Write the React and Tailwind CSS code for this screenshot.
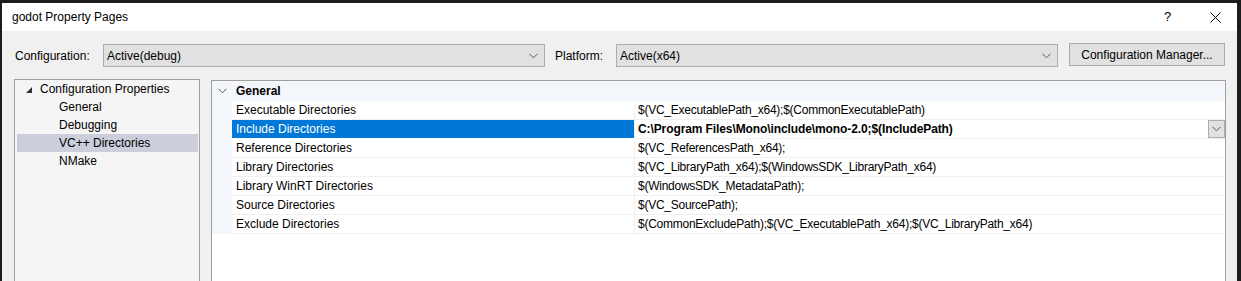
import React from "react";

const Chevron = ({ className = "" }) => (
  <svg width="9" height="6" viewBox="0 0 9 6" className={className}>
    <polyline points="0.5,0.8 4.5,4.8 8.5,0.8" fill="none" stroke="#555" strokeWidth="1" />
  </svg>
);

const rows = [
  ["Executable Directories", "$(VC_ExecutablePath_x64);$(CommonExecutablePath)"],
  ["Include Directories", "C:\\Program Files\\Mono\\include\\mono-2.0;$(IncludePath)", true],
  ["Reference Directories", "$(VC_ReferencesPath_x64);"],
  ["Library Directories", "$(VC_LibraryPath_x64);$(WindowsSDK_LibraryPath_x64)"],
  ["Library WinRT Directories", "$(WindowsSDK_MetadataPath);"],
  ["Source Directories", "$(VC_SourcePath);"],
  ["Exclude Directories", "$(CommonExcludePath);$(VC_ExecutablePath_x64);$(VC_LibraryPath_x64)"],
];

export default function App() {
  return (
    <div
      className="w-[1241px] h-[281px] overflow-hidden bg-[#1c1c1c] flex pt-[3px] pl-[2px] pr-[4px] text-[12px] text-black"
      style={{ fontFamily: '"Liberation Sans", Arial, sans-serif' }}
    >
      <div className="flex-1 flex flex-col bg-[#f0f0f0]">
        {/* Title bar */}
        <div className="h-[28px] bg-white flex items-center pl-[10px] shrink-0">
          <span className="flex-1">godot Property Pages</span>
          <span className="w-[10px] text-[13px] mr-[36px]">?</span>
          <svg width="11" height="11" viewBox="0 0 11 11" className="mr-[16px]">
            <path d="M0.5 0.5 L10.5 10.5 M10.5 0.5 L0.5 10.5" stroke="#000" strokeWidth="1" />
          </svg>
        </div>

        {/* Config row */}
        <div className="mt-[13px] h-[23px] flex items-center pl-[13px] shrink-0">
          <div className="w-[88px]">Configuration:</div>
          <div className="w-[442px] h-[23px] bg-[#e1e1e1] border border-[#adadad] flex items-center pl-[3px] pr-[6px]">
            <span className="flex-1">Active(debug)</span>
            <Chevron />
          </div>
          <div className="ml-[10px] w-[61px]">Platform:</div>
          <div className="w-[442px] h-[23px] bg-[#e1e1e1] border border-[#adadad] flex items-center pl-[3px] pr-[6px]">
            <span className="flex-1">Active(x64)</span>
            <Chevron />
          </div>
          <div className="ml-[11px] w-[156px] h-[23px] -mt-[2px] bg-[#e1e1e1] border border-[#adadad] flex items-center justify-center">
            Configuration Manager...
          </div>
        </div>

        {/* Panels */}
        <div className="mt-[12px] flex-1 flex pl-[12px] pr-[11px] gap-[11px] min-h-0">
          {/* Tree */}
          <div className="w-[186px] h-[260px] shrink-0 bg-[#f5f5f5] border border-[#a0a0a0] px-[1px]">
            <div className="h-[18px] flex items-center">
              <svg width="8" height="8" viewBox="0 0 8 8" className="ml-[9px] mr-[7px] mt-[2px]">
                <polygon points="7,1 7,7 1,7" fill="#333" />
              </svg>
              <span>Configuration Properties</span>
            </div>
            <div className="h-[18px] flex items-center pl-[43px]">General</div>
            <div className="h-[18px] flex items-center pl-[43px]">Debugging</div>
            <div className="h-[18px] flex items-center pl-[43px] bg-[#cccedb] ml-[1px]">
              <span className="-ml-px">VC++ Directories</span>
            </div>
            <div className="h-[18px] flex items-center pl-[43px]">NMake</div>
          </div>

          {/* Property grid */}
          <div className="flex-1 h-[260px] mt-[1px] bg-white border border-[#a0a0a0]">
            <div className="h-[20px] bg-[#f3f6fb] flex items-center">
              <div className="w-[20px] flex justify-center">
                <Chevron />
              </div>
              <span className="pl-[4px] font-bold">General</span>
            </div>
            {rows.map(([name, value, sel]) => (
              <div key={name} className="flex h-[19px]">
                <div className="w-[20px] bg-[#f3f6fb] shrink-0" />
                <div
                  className={
                    sel
                      ? "w-[402px] shrink-0 h-[18px] bg-[#0078d7] text-white pl-[4px] flex items-center"
                      : "w-[402px] shrink-0 h-[19px] border-b border-[#f0f0f0] pl-[4px] flex items-center"
                  }
                >
                  {name}
                </div>
                <div className="flex-1 h-[19px] border-b border-l border-[#f0f0f0] pl-[3px] flex items-center">
                  <span
                    className={
                      sel ? "flex-1 font-bold tracking-[-0.1px]" : "flex-1 tracking-[-0.25px]"
                    }
                  >
                    {value}
                  </span>
                  {sel && (
                    <div className="w-[17px] h-[18px] bg-[#e1e1e1] border border-[#adadad] flex items-center justify-center">
                      <Chevron />
                    </div>
                  )}
                </div>
              </div>
            ))}
          </div>
        </div>
      </div>
    </div>
  );
}
